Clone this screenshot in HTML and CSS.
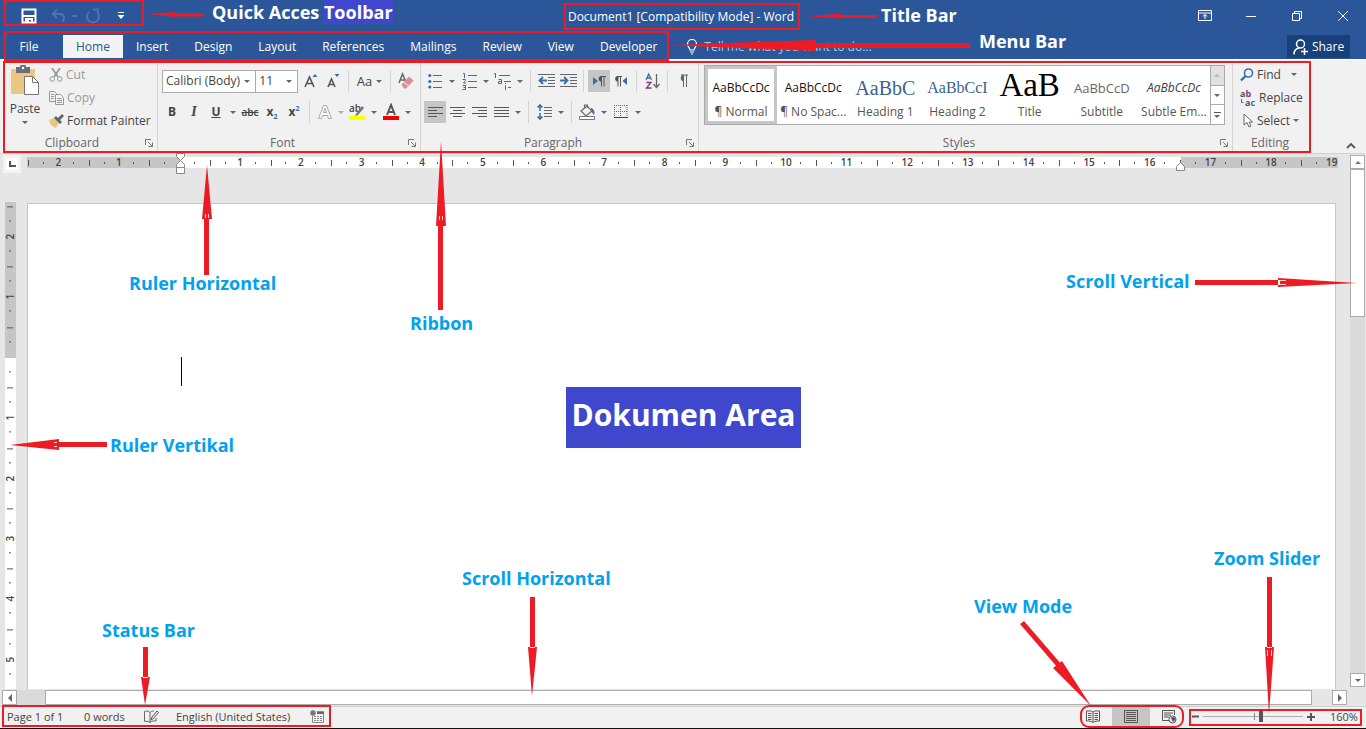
FILE: index.html
```html
<!DOCTYPE html>
<html lang="en">
<head>
<meta charset="utf-8">
<title>Document1 [Compatibility Mode] - Word</title>
<link rel="stylesheet" href="styles.css">
</head>
<body>
<div class="app">
  <header class="titlebar">
    <div class="quick">
      <button class="qbtn" aria-label="Save"><svg width="16" height="16" viewBox="0 0 16 16"><path d="M1.5 1.5h13v13h-13z" fill="none" stroke="#fff" stroke-width="2"/><path d="M2 8h12M5 15v-4h6v4" fill="none" stroke="#fff" stroke-width="2"/><path d="M6 12h2v3H6z" fill="#fff"/></svg></button>
      <button class="qbtn dim" aria-label="Undo"><svg width="16" height="16" viewBox="0 0 16 16"><path d="M2 6h7a4 4 0 0 1 2 7.500M6 1.500L1.800 6 6 10" fill="none" stroke="#4a74b4" stroke-width="2"/></svg></button>
      <span class="qcaret" aria-hidden="true"></span>
      <button class="qbtn dim" aria-label="Repeat"><svg width="16" height="16" viewBox="0 0 16 16"><path d="M4 4a6 6 0 1 0 8 0M8 1.500h5v5" fill="none" stroke="#4a74b4" stroke-width="2"/></svg></button>
      <button class="qbtn" aria-label="Customize toolbar"><svg width="8" height="9" viewBox="0 0 8 9"><path d="M1 1.500h6" stroke="#fff"/><path d="M0.500 4h7L4 8z" fill="#fff"/></svg></button>
    </div>
    <h1 class="doc-title">Document1 [Compatibility Mode] - Word</h1>
    <div class="window-buttons">
      <button aria-label="Ribbon display options"><svg width="14" height="12" viewBox="0 0 14 12"><path d="M.5.500h13v10H.500zM.5 3h13M7 9V4.500M4.800 6.500L7 4.500l2.200 2" fill="none" stroke="#fff"/></svg></button>
      <button aria-label="Minimize"><svg width="12" height="12"><path d="M1 6.500h10" stroke="#fff"/></svg></button>
      <button aria-label="Restore"><svg width="12" height="12" viewBox="0 0 12 12"><path d="M1.500 3.500h7v7h-7zM3.500 3V1.500h7v7H9" fill="none" stroke="#fff"/></svg></button>
      <button aria-label="Close"><svg width="12" height="12" viewBox="0 0 12 12"><path d="M1 1l10 10M11 1L1 11" stroke="#fff"/></svg></button>
    </div>
  </header>

  <nav class="tabs">
    <button class="tab file">File</button>
    <button class="tab active">Home</button>
    <button class="tab">Insert</button>
    <button class="tab">Design</button>
    <button class="tab">Layout</button>
    <button class="tab">References</button>
    <button class="tab">Mailings</button>
    <button class="tab">Review</button>
    <button class="tab">View</button>
    <button class="tab">Developer</button>
    <label class="tell"><svg width="12" height="16" viewBox="0 0 12 16"><path d="M4 11C4 9 1.500 8 1.500 5a4.500 4.500 0 0 1 9 0C10.500 8 8 9 8 11zM4 13h4M5 15h2" fill="none" stroke="#fff" stroke-width="1.200"/></svg><input type="text" placeholder="Tell me what you want to do..." aria-label="Tell me what you want to do"></label>
    <button class="share"><svg width="15" height="16" viewBox="0 0 15 16"><circle cx="7.500" cy="5" r="4" fill="none" stroke="#fff" stroke-width="1.500"/><path d="M1 15.500C1 11 4 9.300 6.500 9M11.500 9v7M8 12.500h7" fill="none" stroke="#fff" stroke-width="1.500"/></svg>Share</button>
  </nav>

  <section class="ribbon" aria-label="Ribbon">
    <div class="group clipboard">
      <div class="group-body">
        <button class="paste">
          <svg width="30" height="32" viewBox="0 0 30 32"><path d="M1 4h24v25H1z" fill="#ecc781"/><path d="M6 2h4a3 3 0 0 1 6 0h4v6H6z" fill="#6a6e78"/><circle cx="13" cy="3" r="1.300" fill="#fff"/><path d="M14.500 11.500h8l6 6v12h-14z" fill="#fff" stroke="#777"/><path d="M22.500 11.500v6h6" fill="none" stroke="#777"/></svg>
          <span>Paste</span><i class="caret"></i>
        </button>
        <div class="stack">
          <button class="line off"><svg width="14" height="14" viewBox="0 0 14 14"><path d="M3 0l6 9M11 0L5 9" stroke="#999" stroke-width="1.800"/><circle cx="3.200" cy="11" r="2.300" fill="none" stroke="#999"/><circle cx="10.800" cy="11" r="2.300" fill="none" stroke="#999"/></svg>Cut</button>
          <button class="line off"><svg width="15" height="14" viewBox="0 0 15 14"><path d="M6 10.500H.500v-10h5l2 2V4M2 3.500h3M2 5.500h3M2 7.500h3" fill="none" stroke="#999"/><path d="M6.500 3.500h5l3 3v7h-8zM8 7.500h5M8 9.500h5M8 11.500h5" fill="#f5f5f5" stroke="#999"/></svg>Copy</button>
          <button class="line"><svg width="15" height="14" viewBox="0 0 15 14"><path d="M0 6l5-2 5 5-3 5C3 13 1 10 0 6z" fill="#ecc781"/><path d="M5 4l2-2 6 6-2 2zM9 4l4-4 2 2-4 4z" fill="#5e626b"/></svg>Format Painter</button>
        </div>
      </div>
      <div class="group-foot"><span>Clipboard</span><button class="launch" aria-label="Clipboard options"><svg width="8" height="8" viewBox="0 0 8 8"><path d="M.5 6V.500H6M3 3l4 4M7.500 3.500v4h-4" fill="none" stroke="#777"/></svg></button></div>
    </div>

    <div class="group font">
      <div class="group-body rows">
        <div class="row">
          <div class="combo family"><select aria-label="Font"><option>Calibri (Body)</option></select><i class="caret"></i></div>
          <div class="combo size"><select aria-label="Font size"><option>11</option></select><i class="caret"></i></div>
          <button class="ib" aria-label="Grow font"><svg width="16" height="18" viewBox="0 0 16 18"><path d="M2 15L6.500 5 11 15M3.500 11.500h6" fill="none" stroke="#555" stroke-width="1.600"/><path d="M9.500 5L12 2l2.500 3z" fill="#3b6ea5"/></svg></button>
          <button class="ib" aria-label="Shrink font"><svg width="16" height="18" viewBox="0 0 16 18"><path d="M3 15L6.500 7 10 15M4 12.500h5" fill="none" stroke="#555" stroke-width="1.600"/><path d="M9.500 2L12 5l2.500-3z" fill="#3b6ea5"/></svg></button>
          <i class="sep"></i>
          <button class="ib wide" aria-label="Change case"><span class="case">Aa</span><i class="caret"></i></button>
          <i class="sep"></i>
          <button class="ib" aria-label="Clear formatting"><svg width="16" height="18" viewBox="0 0 16 18"><path d="M1 11L4.500 2 8 10M2.500 8h4" fill="none" stroke="#666" stroke-width="1.500"/><path d="M3.500 12.500L11 4.500l4.500 4L8 16.500H6z" fill="#e08a96"/><path d="M5.500 10l5 4" stroke="#f6f6f6"/></svg></button>
        </div>
        <div class="row second">
          <button class="ib b">B</button><button class="ib it">I</button><button class="ib u">U</button><button class="dd" aria-label="Underline style"><i class="caret"></i></button>
          <button class="ib strike">abc</button>
          <button class="ib scr" aria-label="Subscript"><span>x<sub>2</sub></span></button>
          <button class="ib scr" aria-label="Superscript"><span>x<sup>2</sup></span></button>
          <i class="sep"></i>
          <button class="ib" aria-label="Text effects"><svg width="16" height="18" viewBox="0 0 16 18"><path d="M1.500 15.500L6.500 2.500h3l5 13h-3l-1-3h-5l-1 3zM6.300 9.500h3.400L8 5.500z" fill="#fafafa" stroke="#aaa"/></svg></button><button class="dd faint" aria-label="Text effects menu"><i class="caret"></i></button>
          <button class="ib" aria-label="Highlight"><svg width="18" height="18" viewBox="0 0 18 18"><text x="1" y="9" class="ab">ab</text><path d="M8 11l6-8 2 2-6 7-3 1z" fill="#777"/><path d="M1 13h16v4H1z" fill="#ffff00"/></svg></button><button class="dd" aria-label="Highlight colours"><i class="caret"></i></button>
          <button class="ib" aria-label="Font color"><svg width="18" height="18" viewBox="0 0 18 18"><path d="M5 12L9 2l4 10M6 9h6" fill="none" stroke="#555" stroke-width="2"/><path d="M1 13h16v4H1z" fill="#f00000"/></svg></button><button class="dd" aria-label="Font colours"><i class="caret"></i></button>
        </div>
      </div>
      <div class="group-foot"><span>Font</span><button class="launch" aria-label="Font options"><svg width="8" height="8" viewBox="0 0 8 8"><path d="M.5 6V.500H6M3 3l4 4M7.500 3.500v4h-4" fill="none" stroke="#777"/></svg></button></div>
    </div>

    <div class="group para">
      <div class="group-body rows">
        <div class="row">
          <button class="ib" aria-label="Bullets"><svg width="14" height="16" viewBox="0 0 14 16"><path d="M5 2.500h9M5 8.500h9M5 14.500h9" stroke="#666"/><circle cx="1.800" cy="2.500" r="1.600" fill="#3b6ea5"/><circle cx="1.800" cy="8.500" r="1.600" fill="#3b6ea5"/><circle cx="1.800" cy="14" r="1.600" fill="#3b6ea5"/></svg></button><button class="dd" aria-label="Bullet library"><i class="caret"></i></button>
          <button class="ib" aria-label="Numbering"><svg width="15" height="18" viewBox="0 0 15 18"><path d="M6 3.500h9M6 9.500h9M6 15.500h9" stroke="#666"/><g fill="none" stroke="#3b6ea5"><path d="M1 1.500h1.500V6M.5 7.500h3v1l-2 2.500h2.500M.5 13.500h3v4h-3M1.500 15.500h2"/></g></svg></button><button class="dd" aria-label="Number library"><i class="caret"></i></button>
          <button class="ib" aria-label="Multilevel list"><svg width="18" height="18" viewBox="0 0 18 18"><path d="M5 3.500h11M10 9.500h7M14 15.500h3" stroke="#666"/><g fill="none" stroke="#3b6ea5"><path d="M0 1.500h1.500V6M4.500 7.500h3v4h-3v-2h3M11.500 13.500V18M11.500 11v1"/></g></svg></button><button class="dd" aria-label="List library"><i class="caret"></i></button>
          <i class="sep"></i>
          <button class="ib" aria-label="Decrease indent"><svg width="17" height="14" viewBox="0 0 17 14"><path d="M0 .5h17M10 3.500h7M10 6.500h7M10 9.500h7M0 12.500h17" stroke="#666"/><path d="M9 6.500H2M5 3L1.500 6.500 5 10" fill="none" stroke="#3b6ea5" stroke-width="1.800"/></svg></button>
          <button class="ib" aria-label="Increase indent"><svg width="17" height="14" viewBox="0 0 17 14"><path d="M0 .5h17M10 3.500h7M10 6.500h7M10 9.500h7M0 12.500h17" stroke="#666"/><path d="M0 6.500h7M4 3l3.500 3.500L4 10" fill="none" stroke="#3b6ea5" stroke-width="1.800"/></svg></button>
          <i class="sep"></i>
          <button class="ib on" aria-label="Left to right"><svg width="14" height="12" viewBox="0 0 14 12"><path d="M1 2l5 4-5 4z" fill="#3b6ea5"/><path d="M9.500 1.500v10M12 1.500v10M8 1.500h6" stroke="#555"/><path d="M9.500 1a2.800 2.800 0 0 0 0 5.600z" fill="#555"/></svg></button>
          <button class="ib" aria-label="Right to left"><svg width="14" height="12" viewBox="0 0 14 12"><path d="M13 2L8.500 6l4.500 4z" fill="#3b6ea5"/><path d="M4 1.500v10M6.500 1.500v10M3 1.500h5" stroke="#555"/><path d="M4 1a2.800 2.800 0 0 0 0 5.600z" fill="#555"/></svg></button>
          <i class="sep"></i>
          <button class="ib" aria-label="Sort"><svg width="15" height="18" viewBox="0 0 15 18"><path d="M1 8l2.700-6L6.500 8M2 6h3.500" fill="none" stroke="#3b6ea5" stroke-width="1.300"/><path d="M1.500 10.500h4.500L1.500 16h5" fill="none" stroke="#80397b" stroke-width="1.300"/><path d="M11.500 2v13M8.500 12l3 3.500 3-3.500" fill="none" stroke="#666" stroke-width="1.300"/></svg></button>
          <i class="sep"></i>
          <button class="ib" aria-label="Show paragraph marks"><svg width="12" height="14" viewBox="0 0 12 14"><path d="M4 1h7M6.500 1v12M9.500 1v12" stroke="#666"/><path d="M6.500.500a3.600 3.600 0 0 0 0 7z" fill="#666"/></svg></button>
        </div>
        <div class="row second">
          <button class="ib on" aria-label="Align left"><svg width="15" height="13"><path d="M0 1.500h15M0 4.500h9M0 7.500h15M0 10.500h9" stroke="#555"/></svg></button>
          <button class="ib" aria-label="Center"><svg width="15" height="13"><path d="M0 1.500h15M3 4.500h9M0 7.500h15M3 10.500h9" stroke="#555"/></svg></button>
          <button class="ib" aria-label="Align right"><svg width="15" height="13"><path d="M0 1.500h15M6 4.500h9M0 7.500h15M6 10.500h9" stroke="#555"/></svg></button>
          <button class="ib" aria-label="Justify"><svg width="15" height="13"><path d="M0 1.500h15M0 4.500h15M0 7.500h15M0 10.500h15" stroke="#555"/></svg></button><button class="dd" aria-label="Justify options"><i class="caret"></i></button>
          <i class="sep"></i>
          <button class="ib" aria-label="Line spacing"><svg width="15" height="16" viewBox="0 0 15 16"><path d="M7 3.500h8M7 6.500h8M7 9.500h8M7 12.500h8" stroke="#666"/><path d="M3 1v6M3 9v6M.5 3.500L3 1l2.500 2.500M.5 12.500L3 15l2.500-2.500" fill="none" stroke="#3b6ea5" stroke-width="1.600"/></svg></button><button class="dd" aria-label="Line spacing options"><i class="caret"></i></button>
          <i class="sep"></i>
          <button class="ib" aria-label="Shading"><svg width="17" height="17" viewBox="0 0 17 17"><path d="M2 7l6-5 5 5-6 5zM5.500 5V1h3v3" fill="none" stroke="#666" stroke-width="1.200"/><path d="M12 4c3 1 4 4 3 7l-3-4z" fill="#3b6ea5"/><path d="M.5 12.500h15v3H.500z" fill="#fff" stroke="#777"/></svg></button><button class="dd" aria-label="Shading colours"><i class="caret"></i></button>
          <button class="ib" aria-label="Borders"><svg width="14" height="14" viewBox="0 0 14 14"><path d="M.5 0v13M13 0v13M6.500 0v13M0 .5h14M0 6.500h14" stroke="#666" stroke-dasharray="1 1"/><path d="M0 12.500h14" stroke="#444"/></svg></button><button class="dd" aria-label="Border options"><i class="caret"></i></button>
        </div>
      </div>
      <div class="group-foot"><span>Paragraph</span><button class="launch" aria-label="Paragraph options"><svg width="8" height="8" viewBox="0 0 8 8"><path d="M.5 6V.500H6M3 3l4 4M7.500 3.500v4h-4" fill="none" stroke="#777"/></svg></button></div>
    </div>

    <div class="group styles">
      <div class="group-body">
        <div class="gallery">
          <button class="style chosen"><span class="sample">AaBbCcDc</span><span>¶ Normal</span></button>
          <button class="style"><span class="sample">AaBbCcDc</span><span>¶ No Spac...</span></button>
          <button class="style"><span class="sample h1">AaBbC</span><span>Heading 1</span></button>
          <button class="style"><span class="sample h2">AaBbCcI</span><span>Heading 2</span></button>
          <button class="style"><span class="sample title">AaB</span><span>Title</span></button>
          <button class="style"><span class="sample subtitle">AaBbCcD</span><span>Subtitle</span></button>
          <button class="style"><span class="sample subtle">AaBbCcDc</span><span>Subtle Em...</span></button>
          <div class="gallery-scroll">
            <button disabled aria-label="Previous styles"><i class="caret up"></i></button>
            <button aria-label="Next styles"><i class="caret"></i></button>
            <button class="more" aria-label="More styles"><i class="caret"></i></button>
          </div>
        </div>
      </div>
      <div class="group-foot"><span>Styles</span><button class="launch" aria-label="Style options"><svg width="8" height="8" viewBox="0 0 8 8"><path d="M.5 6V.500H6M3 3l4 4M7.500 3.500v4h-4" fill="none" stroke="#777"/></svg></button></div>
    </div>

    <div class="group editing">
      <div class="group-body">
        <div class="stack">
          <button class="line"><svg width="14" height="14" viewBox="0 0 14 14"><circle cx="8.500" cy="5" r="4" fill="none" stroke="#3b6ea5" stroke-width="1.600"/><path d="M5.500 8L1 12.500" stroke="#3b6ea5" stroke-width="2.400"/></svg>Find<i class="caret far"></i></button>
          <button class="line"><svg width="16" height="18" viewBox="0 0 16 18" class="rep"><text x="0" y="8" fill="#555">a<tspan fill="#80397b">b</tspan></text><text x="5" y="17" fill="#555">a<tspan fill="#3b6ea5">c</tspan></text><path d="M1.500 10v3.500h2" fill="none" stroke="#3b6ea5"/></svg>Replace</button>
          <button class="line"><svg width="14" height="16" viewBox="0 0 14 16"><path d="M4 1v11l3-2.500L9 14l2-1-2-4h3.500z" fill="#fff" stroke="#666"/></svg>Select<i class="caret"></i></button>
        </div>
      </div>
      <div class="group-foot"><span>Editing</span></div>
    </div>
    <button class="collapse" aria-label="Collapse the ribbon"><svg width="10" height="7" viewBox="0 0 10 7"><path d="M1 6l4-4 4 4" fill="none" stroke="#555" stroke-width="1.800"/></svg></button>
  </section>

  <main class="workspace">
    <div class="hruler">
      <button class="tabstop" aria-label="Tab stop"><svg width="7" height="6"><path d="M1 0v5h6" fill="none" stroke="#555" stroke-width="2"/></svg></button>
      <div class="htrack">
        <div class="hcells"><b>2</b><b>1</b><b></b><b>1</b><b>2</b><b>3</b><b>4</b><b>5</b><b>6</b><b>7</b><b>8</b><b>9</b><b>10</b><b>11</b><b>12</b><b>13</b><b>14</b><b>15</b><b>16</b><b>17</b><b>18</b><b>19</b></div>
        <svg class="indent left" width="10" height="22" viewBox="0 0 10 22"><path d="M.5.500h8v3l-4 4-4-4zM.5 14.500v-3l4-4 4 4v3zM.5 14.500h8v6h-8z" fill="#fff" stroke="#888"/></svg>
        <svg class="indent right" width="10" height="9" viewBox="0 0 10 9"><path d="M.5 8.500v-4l4-4 4 4v4z" fill="#fff" stroke="#888"/></svg>
      </div>
    </div>
    <div class="vruler">
      <div class="vcells"><b>2</b><b>1</b><b></b><b>1</b><b>2</b><b>3</b><b>4</b><b>5</b></div>
    </div>
    <article class="page" contenteditable="true" aria-label="Document"><p class="cursor-line"><span class="cursor"></span></p></article>
    <div class="vscroll">
      <button class="sb" aria-label="Scroll up"><i class="caret up"></i></button>
      <div class="vtrack"><div class="vthumb"></div></div>
      <button class="sb" aria-label="Scroll down"><i class="caret"></i></button>
    </div>
    <div class="hscroll">
      <button class="sb" aria-label="Scroll left"><i class="caret west"></i></button>
      <div class="hstrack"><div class="hthumb"></div></div>
      <button class="sb" aria-label="Scroll right"><i class="caret east"></i></button>
    </div>
  </main>

  <footer class="status">
    <span class="pages">Page 1 of 1</span>
    <span class="words">0 words</span>
    <button aria-label="Proofing"><svg width="16" height="14" viewBox="0 0 16 14"><path d="M7 2.500C5 .5 3 1 1.500 1.500v10C3 11 5 11 7 12.500zM7 2.500C8 1.500 9 1.200 11 1M7 12.500c2-2 4-1.500 6-1.500V8" fill="none" stroke="#666"/><path d="M8 10l1-3 5-6 1.500 1.500-5 6z" fill="none" stroke="#555"/></svg></button>
    <span class="lang">English (United States)</span>
    <button aria-label="Record macro"><svg width="14" height="13" viewBox="0 0 14 13"><path d="M2.500 6v6.500h11v-11H7" fill="#f5f5f5" stroke="#888"/><path d="M7 2h7v2H7z" fill="#666"/><circle cx="3" cy="3" r="2.800" fill="#777"/><path d="M4 6.500h8M4 8.500h8M4 10.500h8" stroke="#888" stroke-dasharray="2 1"/></svg></button>
    <div class="modes">
      <button aria-label="Read mode"><svg width="14" height="13" viewBox="0 0 14 13"><path d="M7 2C5 .5 3 1 .500 1v10c3 0 4.500 0 6.500 1.500C9 11 11 11 13.500 11V1C11 1 9 .5 7 2zv10M2 3.500h3.500M2 5.500h3.500M2 7.500h3.500M2 9.500h3.500M8.500 3.500H12M8.500 5.500H12M8.500 7.500H12M8.500 9.500H12" fill="none" stroke="#555"/></svg></button>
      <button class="on" aria-label="Print layout"><svg width="14" height="13"><path d="M.5.500h13v12H.500zM2 2.500h10M2 4.500h10M2 6.500h10M2 8.500h10M2 10.500h10" fill="none" stroke="#555"/></svg></button>
      <button aria-label="Web layout"><svg width="15" height="14" viewBox="0 0 15 14"><path d="M12.500 5V.500H.500v10H7M2 3h9M2 5h7M2 7h5" fill="none" stroke="#555"/><circle cx="10.500" cy="9.500" r="3.500" fill="#eee" stroke="#555"/><path d="M9 8c2-2 4-1 4.500 1.500L11 12z" fill="#555"/></svg></button>
    </div>
    <div class="zoom">
      <button aria-label="Zoom out"><svg width="7" height="7"><path d="M0 3.500h7" stroke="#555" stroke-width="2"/></svg></button>
      <input type="range" min="0" max="100" value="58" aria-label="Zoom">
      <button aria-label="Zoom in"><svg width="8" height="8"><path d="M0 4h8M4 0v8" stroke="#555" stroke-width="2"/></svg></button>
      <span>160%</span>
    </div>
  </footer>

  <div class="notes">
    <svg class="marks" width="1366" height="729" viewBox="0 0 1366 729">
      <g fill="none" stroke="#ed1c24" stroke-width="2">
        <path d="M5 1h138v24H5zM5 32h663v28H5zM4 62h1306v90H4zM565 4h234v25H565zM3 706h327v20H3zM1190 710h171v15h-171z"/>
        <rect x="1081" y="706" width="102" height="21" rx="8"/>
      </g>
      <g fill="#ed1c24">
        <path d="M148 14l28-2v5zM174 13.500h30v3h-30z"/>
        <path d="M809 16.500l32-3v5zM840 15h37v3h-37z"/>
        <path d="M668 45l148-5v11zM814 43h156v5H814z"/>
        <path d="M207 165l5 54h-10zM204 218h5v57h-5z"/>
        <path d="M441 141l5 85h-10zM438 225h5v85h-5z"/>
        <path d="M1357 283l-79-5v9zM1195 280h85v5h-85z"/>
        <path d="M10 445l49-6v11zM58 442h49v5H58z"/>
        <path d="M145 705l5-28h-9zM143 647h5v31h-5z"/>
        <path d="M532 696l5-49h-9zM530 597h5v51h-5z"/>
        <path d="M1269 714l5-67h-9zM1267 577h5v71h-5z"/>
        <path d="M1091 706l-38-38 9-7zM1020 624l4-3 38 44-4 3z"/>
      </g>
      <g fill="none" stroke="#fff" stroke-opacity=".8"><path d="M205.500 218v-4M208.500 218v-4M439.500 220v-4M442.500 220v-4M1280 280.500h6M1280 284.500h6M54 442.500h3M54 446.500h3M1267.500 656v-6M1271.500 656v-6"/></g>
    </svg>
    <span class="note white n-quick">Quick Acces <mark>Toolbar</mark></span>
    <span class="note white n-title">Title Bar</span>
    <span class="note white n-menu">Menu Bar</span>
    <span class="note n-rh">Ruler Horizontal</span>
    <span class="note n-ribbon">Ribbon</span>
    <span class="note n-sv">Scroll Vertical</span>
    <span class="note n-rv">Ruler Vertikal</span>
    <span class="note n-sh">Scroll Horizontal</span>
    <span class="note n-status">Status Bar</span>
    <span class="note n-view">View Mode</span>
    <span class="note n-zoom">Zoom Slider</span>
    <strong class="area">Dokumen Area</strong>
  </div>
</div>
</body>
</html>
```
FILE: styles.css
```css
* { box-sizing: border-box; }
body { margin: 0; font-family: "Open Sans", "Noto Sans", sans-serif; font-size: 12px; line-height: 16px; color: #444; }
button, input, select { font: inherit; color: inherit; background: none; border: 0; padding: 0; margin: 0; }
button { display: flex; align-items: center; justify-content: center; white-space: nowrap; }
svg { display: block; flex: none; }
.app { position: relative; display: flex; flex-direction: column; height: 100vh; overflow: hidden; background: #e6e6e6; border-bottom: 1px solid #111; }

.titlebar { display: grid; grid-template-columns: 1fr auto 1fr; align-items: center; height: 35px; padding: 0 8px 4px 4px; background: #2b579a; color: #fff; }
.quick { display: flex; align-items: center; padding-left: 14px; }
.qbtn { width: 22px; height: 22px; margin-right: 8px; }
.dim { margin-right: 0; }
.qcaret { width: 5px; height: 2px; margin: 0 2px; background: #4a74b4; }
.qcaret + .dim { margin: 0 6px 0 3px; }
.doc-title { margin: 3px 0 0; font-size: 12px; font-weight: 400; }
.window-buttons { display: flex; justify-content: flex-end; }
.window-buttons button { width: 30px; height: 24px; margin-left: 16px; }

.tabs { display: flex; height: 24px; padding-left: 6px; background: #2b579a; color: #fff; }
.tab { height: 23px; padding: 0 13px; }
.file { width: 46px; margin-right: 11px; }
.active { background: #f3f3f3; color: #2b579a; }
.tell { display: flex; flex: 1; align-items: center; gap: 6px; margin-left: 16px; height: 23px; }
.tell input { flex: 1; outline: 0; }
.tell input::placeholder { color: #b5c7e3; opacity: 1; }
.share { gap: 4px; width: 63px; height: 23px; margin-right: 16px; background: #18407a; }

.ribbon { display: flex; height: 95px; padding-top: 3px; background: #f1f1f1; border-top: 1px solid #fff; border-bottom: 1px solid #d2d2d2; }
.group { display: flex; flex: none; flex-direction: column; border-right: 1px solid #d4d4d4; margin-bottom: 2px; }
.group-body { display: flex; flex: 1; }
.group-foot { display: flex; align-items: center; height: 16px; padding-right: 3px; color: #666; }
.group-foot span { flex: 1; text-align: center; }
.launch { width: 10px; height: 10px; }
.clipboard { width: 158px; }
.font { width: 263px; }
.para { width: 278px; }
.styles { flex: 1; }
.editing { width: 78px; }
.caret { flex: none; width: 0; height: 0; border: 3px solid transparent; border-top-color: #666; border-bottom: 0; }
.up { border-top: 0; border-bottom: 3px solid #777; }
.west { border: 4px solid transparent; border-right-color: #666; border-left: 0; }
.east { border: 4px solid transparent; border-left-color: #666; border-right: 0; }
.paste { flex-direction: column; justify-content: flex-start; gap: 4px; width: 40px; margin-left: 5px; padding-top: 2px; }
.stack { display: flex; flex-direction: column; padding-left: 4px; }
.line { justify-content: flex-start; gap: 3px; height: 23px; }
.off { color: #999; }
.rows { flex-direction: column; padding: 6px 3px 0; }
.row { display: flex; height: 24px; align-items: center; }
.second { margin-top: 7px; }
.combo { display: flex; align-items: center; height: 23px; padding: 0 5px 0 3px; background: #fff; border: 1px solid #ababab; }
.combo select { flex: 1; min-width: 0; appearance: none; }
.family { width: 95px; margin-left: 1px; }
.size { width: 43px; margin: 0 2px 0 -1px; }
.ib { flex: none; width: 22px; height: 22px; }
.wide { width: 33px; gap: 4px; }
.dd { flex: none; width: 12px; height: 22px; }
.faint { width: 10px; opacity: .5; }
.on { background: #c6c6c6; }
.sep { flex: none; width: 1px; height: 22px; margin: 0 4px; background: #d4d4d4; }
.case { font-size: 13px; }
.b { font-weight: 700; }
.it { font: italic 700 14px/16px "Liberation Serif", serif; }
.u { font-weight: 700; text-decoration: underline; }
.strike { font-size: 10px; font-weight: 600; text-decoration: line-through; }
.scr { font-weight: 700; }
.scr sub, .scr sup { font-size: 7px; line-height: 0; color: #3b6ea5; }
.ab { font-size: 10px; font-weight: 600; fill: #444; }
.rep { font-size: 9px; font-weight: 700; overflow: visible; }
.far { margin-left: 7px; }

.gallery { display: flex; flex: 1; height: 60px; margin: 2px 7px 0 5px; background: #fff; border: 1px solid #ababab; }
.style { flex: 1; min-width: 0; flex-direction: column; gap: 2px; padding-top: 3px; border: 3px solid transparent; color: #555; }
.chosen { border-color: #c6c6c6; }
.style .sample { display: flex; align-items: center; height: 28px; color: #111; }
.style .h1 { font: 20px/28px "Liberation Serif", serif; color: #3b6290; }
.style .h2 { font: 16px/28px "Liberation Serif", serif; color: #3b6290; }
.style .title { align-items: flex-start; font: 33px/22px "Liberation Serif", serif; color: #000; }
.style .subtitle { font-size: 13px; color: #666; }
.style .subtle { font-style: italic; color: #404040; }
.gallery-scroll { display: flex; flex: none; flex-direction: column; width: 14px; border-left: 1px solid #ababab; }
.gallery-scroll button { flex: 1; border-bottom: 1px solid #ababab; }
.gallery-scroll button:disabled { background: #e1e1e1; }
.gallery-scroll .more { flex-direction: column; gap: 2px; border-bottom: 0; }
.gallery-scroll button:disabled .caret { opacity: .4; }
.more::before { content: ""; width: 7px; height: 1px; background: #555; }
.editing .stack { padding-left: 7px; }
.collapse { width: 14px; height: 14px; margin: auto 8px 1px 33px; }

.workspace { display: grid; flex: 1; min-height: 0; grid-template: 49px 1fr 17px / 27px 1fr 13px 17px; }
.hruler { display: flex; grid-column: 1 / 4; align-items: flex-start; }
.tabstop { flex: none; width: 18px; height: 18px; margin: 1px 6px 0 3px; background: #fff; border: 3px solid #f3f3f3; }
.htrack { position: relative; flex: 1; height: 11px; margin: 3px 11px 0 0; background: linear-gradient(90deg, #c6c6c6 153px, #fff 153px, #fff calc(100% - 157px), #c6c6c6 calc(100% - 157px)); }
.hcells { display: grid; grid-template-columns: repeat(22, 1fr); height: 11px; margin: 0 -24px 0 1px; }
.hcells b, .vcells b { display: flex; align-items: center; justify-content: center; font-size: 10px; line-height: 11px; font-weight: 600; }
.hcells b { background: linear-gradient(#555, #555) 0 3px / 1px 6px no-repeat, linear-gradient(#555, #555) 25% 5px / 1px 2px no-repeat, linear-gradient(#555, #555) 75% 5px / 1px 2px no-repeat; }
.hcells b:last-child { background: linear-gradient(#555, #555) 0 3px / 1px 6px no-repeat, linear-gradient(#555, #555) 25% 5px / 1px 2px no-repeat; }
.indent { position: absolute; }
.left { left: 149px; top: -4px; }
.right { right: 152px; top: 5px; }
.vruler { width: 11px; margin-left: 5px; margin-top: -1px; background: linear-gradient(#c6c6c6 156px, #fff 156px); }
.vcells { display: grid; grid-template-rows: repeat(8, 1fr); height: 100%; padding-top: 4px; }
.vcells b { writing-mode: vertical-rl; transform: rotate(180deg); background: linear-gradient(#555, #555) 3px 100% / 6px 1px no-repeat, linear-gradient(#555, #555) 5px 25% / 2px 1px no-repeat, linear-gradient(#555, #555) 5px 75% / 2px 1px no-repeat; }
.page { background: #fff; border: 1px solid #c6c6c6; border-bottom: 0; padding: 153px; outline: 0; }
.cursor-line { margin: 0; }
.cursor { display: block; width: 1px; height: 29px; background: #000; }
.vscroll { grid-area: 1 / 4 / 3 / 5; display: flex; flex-direction: column; padding: 1px 1px 2px; background: #e6e6e6; }
.sb { flex: none; width: 15px; height: 14px; background: #fff; border: 1px solid #ababab; }
.vtrack { flex: 1; background: #dadada; }
.vthumb { height: 148px; background: #fff; border: 1px solid #ababab; }
.hscroll { grid-column: 1 / 4; display: flex; align-items: center; padding: 0 2px; }
.hscroll .sb { height: 15px; }
.hstrack { display: flex; flex: 1; height: 15px; margin-right: 20px; background: linear-gradient(90deg, #dadada 28px, transparent 28px); }
.hthumb { flex: 1; margin-left: 28px; background: #fff; border: 1px solid #ababab; }

.status { display: flex; align-items: center; height: 22px; padding: 0 8px 2px 7px; background: #f1f1f1; border-top: 1px solid #d0d0d0; font-size: 11px; }
.pages { width: 77px; }
.words { width: 58px; }
.lang { width: 118px; margin: 0 14px 0 16px; }
.status > button { width: 18px; height: 20px; }
.modes { display: flex; margin-left: auto; margin-right: 4px; }
.modes button { width: 38px; height: 19px; }
.zoom { display: flex; align-items: center; }
.zoom span { width: 28px; margin-left: 15px; }
.zoom input { width: 100px; height: 12px; margin: 0 4px; appearance: none; background: linear-gradient(#888, #888) 51px 50% / 1px 7px no-repeat, linear-gradient(#aaa, #aaa) 0 50% / 100% 1px no-repeat; }
.zoom input::-webkit-slider-thumb { appearance: none; width: 4px; height: 11px; background: #555; }

.notes { position: absolute; inset: 0; pointer-events: none; }
.marks { position: absolute; left: 0; top: 0; }
.note { position: absolute; font-size: 18px; line-height: 22px; font-weight: 700; color: #00a2ed; white-space: nowrap; }
.white { color: #fff; }
.note mark { color: #fff; background: #3f48cc; }
.n-quick { left: 212px; top: 1px; }
.n-title { left: 881px; top: 4px; }
.n-menu { left: 979px; top: 30px; }
.n-rh { left: 129px; top: 272px; }
.n-ribbon { left: 410px; top: 312px; }
.n-sv { left: 1066px; top: 270px; }
.n-rv { left: 110px; top: 434px; }
.n-sh { left: 462px; top: 567px; }
.n-status { left: 102px; top: 619px; }
.n-view { left: 974px; top: 595px; }
.n-zoom { left: 1214px; top: 547px; }
.area { position: absolute; left: 566px; top: 387px; width: 235px; height: 61px; font-size: 30px; line-height: 56px; text-align: center; white-space: nowrap; color: #fff; background: #3f48cc; }
```
